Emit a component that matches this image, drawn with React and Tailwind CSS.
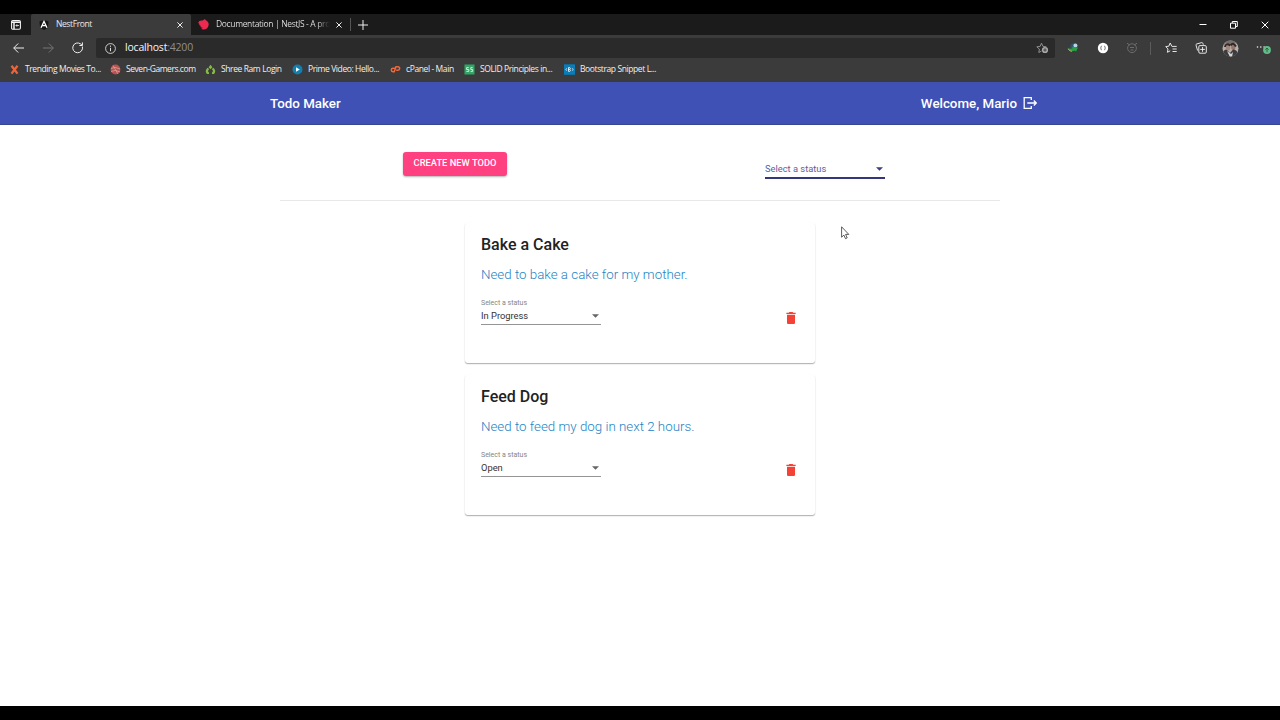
import React, { useState } from "react";

const initialTodos = [
  { id: 1, title: "Bake a Cake", text: "Need to bake a cake for my mother.", status: "In Progress" },
  { id: 2, title: "Feed Dog", text: "Need to feed my dog in next 2 hours.", status: "Open" },
];

function TabStrip() {
  return (
    <div className="flex h-[21px] items-center bg-[#1b1b1b] text-[#e8e8e8]">
      <div className="flex w-[31px] justify-center">
        <svg width="10" height="10" viewBox="0 0 10 10" fill="none" stroke="#f2f2f2" strokeWidth="1.1">
          <rect x="0.6" y="0.6" width="8.8" height="8.6" rx="1.2" />
          <path d="M.6 2.3h8.8M3 2.3v7" strokeWidth="1.5" />
          <path d="M8 5.5H5M6.2 4.2 4.9 5.5l1.3 1.3" strokeWidth=".8" />
        </svg>
      </div>
      <div className="flex h-full w-[160px] items-center rounded-t-[2px] bg-[#3b3b3b] pl-[8px] pr-[8px]">
        <svg width="10" height="10" viewBox="0 0 10 10">
          <path d="M5 0 9.6 1.6 8.9 7.8 5 10 1.1 7.8.4 1.6z" fill="#161616" />
          <path d="M2 7.8 5 1.4l3 6.4M3.3 5.7h3.4" fill="none" stroke="#fff" strokeWidth="1.3" />
        </svg>
        <span className="ml-[7px] flex-1 whitespace-nowrap text-[8.5px] tracking-[-0.4px]">NestFront</span>
        <CloseIcon />
      </div>
      <div className="flex h-full w-[159px] items-center pl-[7px] pr-[8px]">
        <svg width="11" height="11" viewBox="0 0 11 11">
          <path
            d="M.4 3.2C1.6 1.2 3.4 1.6 4.6 1.5 5.4 1.4 5.8.4 6.6.3c.8 0 .7.6 1.3.9 2 .9 3.2 3 2.6 5.3C9.9 9 7.8 10.8 5.3 10.6c-1-.1-1.6-.4-2.2-1 1 .1 1.5-.4 1.4-.9C2.8 8.5 2.2 7.4 2.5 6.4 1.4 6.3 1 5.6 1.3 5 .6 4.6.2 3.9.4 3.2z"
            fill="#ee2950"
          />
        </svg>
        <span className="ml-[7px] flex-none whitespace-nowrap bg-linear-to-r from-[#e8e8e8] from-88% to-transparent bg-clip-text text-[8.5px] tracking-[-0.35px] text-transparent">
          Documentation | NestJS - A pro
        </span>
        <span className="ml-auto flex">
          <CloseIcon />
        </span>
      </div>
      <div className="h-[13px] w-px bg-[#555]" />
      <svg className="ml-[7px]" width="10" height="10" viewBox="0 0 10 10" stroke="#eee" strokeWidth="1">
        <path d="M5 0v10M0 5h10" />
      </svg>
      <div className="ml-auto flex items-center gap-[23px] pr-[11px]">
        <svg width="8" height="8" viewBox="0 0 8 8" stroke="#fff">
          <path d="M.5 3.5h7" />
        </svg>
        <svg width="8" height="8" viewBox="0 0 8 8" fill="none" stroke="#fff">
          <path d="M.5 2.2h5v5h-5zM2.3 2V.5h5v5H5.6" />
        </svg>
        <svg width="8" height="8" viewBox="0 0 8 8" stroke="#fff">
          <path d="m.7.7 6.6 6.6M7.3.7.7 7.3" />
        </svg>
      </div>
    </div>
  );
}

function CloseIcon() {
  return (
    <svg width="6" height="6" viewBox="0 0 6 6" stroke="#eee" strokeWidth="1">
      <path d="m.4.4 5.2 5.2M5.6.4.4 5.6" />
    </svg>
  );
}

function AddressBar() {
  return (
    <div className="flex h-[25px] items-center bg-[#3b3b3b] pt-[1px]">
      <svg className="ml-[13px]" width="11" height="10" viewBox="0 0 11 10" fill="none" stroke="#f0f0f0">
        <path d="M11 5H.8M5.2.5.7 5l4.5 4.5" />
      </svg>
      <svg className="ml-[19px]" width="11" height="10" viewBox="0 0 11 10" fill="none" stroke="#767676">
        <path d="M0 5h10.2M5.8.5 10.3 5 5.8 9.5" />
      </svg>
      <svg className="ml-[18px]" width="12" height="12" viewBox="0 0 12 12" fill="none" stroke="#f0f0f0">
        <path d="M10.4 4.6A4.9 4.9 0 1 1 8.7 2L10.200 3.400M10.400.4V3.500H7.400" />
      </svg>
      <div className="ml-[12px] flex h-[20px] w-[959px] items-center rounded-[2px] bg-[#2a2a2a] pl-[9px] pr-[6px]">
        <svg width="11" height="11" viewBox="0 0 11 11" fill="none" stroke="#ddd">
          <circle cx="5.5" cy="5.5" r="4.9" strokeWidth=".9" />
          <path d="M5.5 4.8v3.4M5.5 2.6v1.2" />
        </svg>
        <span className="ml-[9px] text-[10.5px] tracking-[-0.2px] text-[#f5f5f5]">
          localhost<span className="text-[#8f8f8f]">:4200</span>
        </span>
        <svg className="ml-auto" width="13" height="12" viewBox="0 0 13 12" fill="none" stroke="#999">
          <path d="M5.5 9 2.8 10.5l.6-3.4L.8 4.8l3.3-.4L5.5 1.2l1.5 3.2 3.4.4" strokeWidth=".9" />
          <circle cx="9" cy="8" r="3.1" fill="#aaa" stroke="none" />
          <path d="M9 6.2v3.6M7.2 8h3.6" stroke="#333" strokeWidth=".8" />
        </svg>
      </div>
      <svg className="ml-[12px]" width="12" height="12" viewBox="0 0 12 12">
        <circle cx="7" cy="5" r="3.8" fill="#2d5474" />
        <circle cx="8.4" cy="3.4" r="2" fill="#b5d6e4" />
        <path d="M.8 5.6c1.500 1.400 3.200 1.600 4.800.6L5 4.800l5.800 1-1.800 4-1-1.300C5.500 10.300 2 9 .8 5.600z" fill="#25a33c" />
        <path d="M1.200 6.800c.8 1.800 2.200 2.400 3.800 2.400" fill="none" stroke="#c9b64b" />
      </svg>
      <svg className="ml-[18px]" width="12" height="12" viewBox="0 0 12 12">
        <circle cx="6" cy="6" r="5.2" fill="#fff" />
        <path d="M4.500 3.800Q2.900 6 4.500 8.200M7.500 3.800Q9.100 6 7.500 8.200" fill="none" stroke="#666" strokeWidth=".9" />
      </svg>
      <svg className="ml-[17px]" width="12" height="12" viewBox="0 0 12 12" fill="none" stroke="#6c6c6c">
        <circle cx="6" cy="6.200" r="4.400" />
        <path d="M1 1.200l3 2M11 1.200l-3 2M4 5.500h4M4.500 8h3" />
      </svg>
      <div className="ml-[12px] h-[13px] w-px bg-[#5c5c5c]" />
      <svg className="ml-[14px]" width="12" height="12" viewBox="0 0 12 12" fill="none" stroke="#eee" strokeWidth=".95">
        <path d="M6.700 4 5.200 1 3.800 4.200.7 4.600l2.300 2.300-.6 3.400 2.800-1.500M6.700 4.400h5M7.500 7h4.200M7.500 9.500h4.200" />
      </svg>
      <svg className="ml-[18px]" width="12" height="12" viewBox="0 0 12 12" fill="none" stroke="#eee" strokeWidth=".95">
        <path d="M2.600 8.600 1 3.200Q.8 2.300 1.600 2L6.700.6Q7.500.4 7.800 1.200l.5 1.500" />
        <rect x="3.800" y="3.600" width="7.500" height="7.600" rx="1.200" />
        <path d="M7.550 5v4.800M5.200 7.400h4.700" />
      </svg>
      <svg className="ml-[15px]" width="17" height="17" viewBox="0 0 17 17">
        <defs>
          <clipPath id="avatar">
            <circle cx="8.500" cy="8.500" r="8" />
          </clipPath>
        </defs>
        <g clipPath="url(#avatar)">
          <rect width="17" height="17" fill="#b5b0ae" />
          <path d="M0 0h17v5L13 3 9 5 4 3 0 7z" fill="#77706c" />
          <ellipse cx="6" cy="7.400" rx="2.300" ry="3" fill="#a98777" />
          <ellipse cx="11.300" cy="7" rx="2.200" ry="3" fill="#94766a" />
          <path d="M3 7Q3.500 2.500 8.300 5.500M8.700 5.500Q11 1.500 14 6.500" stroke="#302a29" strokeWidth="2" fill="none" />
          <path d="M0 17c0-6 3-8 5-7l3 3 3-3.500c3 0 5 2 6 7.500z" fill="#3c3b3d" />
          <path d="m5 11 3 6h2l1-5-2 2z" fill="#d8d5d5" />
        </g>
      </svg>
      <svg className="ml-[17px]" width="16" height="12" viewBox="0 0 16 12">
        <circle cx="1.500" cy="5" r=".8" fill="#eee" />
        <circle cx="4.800" cy="5" r=".8" fill="#eee" />
        <circle cx="8.100" cy="5" r=".8" fill="#eee" />
        <circle cx="11" cy="8" r="3.900" fill="#64bd88" />
        <path d="M11 10.200V6.200M9.400 7.600 11 6l1.600 1.600" fill="none" stroke="#245b3d" strokeWidth=".9" />
      </svg>
    </div>
  );
}

function Bookmark({ className, children, label }) {
  return (
    <div className={"flex flex-none items-center " + className}>
      <svg className="flex-none" width="11" height="11" viewBox="0 0 11 11">
        {children}
      </svg>
      <span className="ml-[5px] whitespace-nowrap text-[8.5px]">{label}</span>
    </div>
  );
}

function Bookmarks() {
  return (
    <div className="flex h-[22px] items-center bg-[#3b3b3b] pb-[3px] pl-[9px] text-[#f0f0f0]">
      <Bookmark className="w-[101px] tracking-[-0.4px]" label="Trending Movies To...">
        <path d="m2.500 1.800 6 7.800M8.500 1.800l-6 7.800" stroke="#ef6338" strokeWidth="2.300" />
      </Bookmark>
      <Bookmark className="w-[95px] tracking-[-0.45px]" label="Seven-Gamers.com">
        <circle cx="5.500" cy="5.500" r="4.900" fill="#b65353" />
        <path d="M1 4.500Q5 2 10 5M1 7.500Q5 5 10 8M3 1.500 8 10" stroke="#dda096" strokeWidth=".8" fill="none" />
      </Bookmark>
      <Bookmark className="w-[87px] tracking-[-0.4px]" label="Shree Ram Login">
        <path d="M5.500.800 3.600 3.300l1.900 2 1.900-2zM2.800 3.800C.3 5.500.2 8.500 2 10h2V8.500C2.500 7.500 3 6 4.200 5.300zM8.200 3.800c2.500 1.700 2.600 4.700.8 6.200H7V8.500C8.500 7.500 8 6 6.800 5.300z" fill="#86b947" />
      </Bookmark>
      <Bookmark className="w-[98px] tracking-[-0.4px]" label="Prime Video: Hello...">
        <circle cx="5.500" cy="5.500" r="5" fill="#147eae" />
        <path d="M4 3.200v4.600l3.800-2.300z" fill="#fff" />
      </Bookmark>
      <Bookmark className="w-[74px] tracking-[-0.4px]" label="cPanel - Main">
        <path d="M4.800 4.300H3a1.700 1.700 0 0 0 0 3.400h1.200L6 2.700h1.900a1.700 1.700 0 0 1 0 3.500H6.200" stroke="#f1693b" strokeWidth="1.500" fill="none" />
      </Bookmark>
      <Bookmark className="w-[100px] tracking-[-0.4px]" label="SOLID Principles in...">
        <rect x=".5" y=".5" width="10" height="10" fill="#2fa866" />
        <path d="M4.800 3.600H2.600v1.900h2.200v1.900H2.400M8.700 3.600H6.800v1.900h1.900v1.900H6.600" stroke="#d7f5e2" strokeWidth=".9" fill="none" />
      </Bookmark>
      <Bookmark className="w-[110px] tracking-[-0.4px]" label="Bootstrap Snippet L...">
        <rect y=".3" width="11" height="10.500" fill="#087db8" />
        <path d="M4.500 3.600h1.300q1.100.9 0 1.800 1.300 1 0 2H4.500zM4.500 5.400h1.300M2.800 4.500l-1.100 1 1.100 1M8.200 4.500l1.100 1-1.100 1" stroke="#fff" strokeWidth=".8" fill="none" />
      </Bookmark>
    </div>
  );
}

function Caret({ className }) {
  return (
    <svg className={className} width="7" height="4" viewBox="0 0 7 4" fill="currentColor">
      <path d="M0 .2h7L3.500 3.800z" />
    </svg>
  );
}

function TodoCard({ todo, onDelete }) {
  return (
    <div className="h-[140px] w-[350px] rounded-[3px] bg-white px-4 pt-[12px] shadow-[0_1px_1px_rgba(0,0,0,0.25),0_1px_2px_rgba(0,0,0,0.1)]">
      <h2 className="text-[16px] leading-[20px] font-medium text-[#222]">{todo.title}</h2>
      <p className="mt-[11px] text-[13.33px] leading-[18px] font-light text-[#2583c4]">{todo.text}</p>
      <div className="mt-[15px] flex items-start justify-between">
        <div className="w-[120px] border-b border-[#949494] pb-[2px]">
          <div className="text-[7px] leading-[8px] text-[#858585]">Select a status</div>
          <div className="flex items-center justify-between pr-[2px] text-[9.33px] leading-[13px] text-[#333]">
            <span className="pt-[2px]">{todo.status}</span>
            <Caret className="mt-[3px] text-[#666]" />
          </div>
        </div>
        <button className="mt-[11px]" onClick={() => onDelete(todo.id)}>
          <svg width="16" height="16" viewBox="0 0 24 24" fill="#f44336">
            <path d="M6 19c0 1.100.9 2 2 2h8c1.100 0 2-.9 2-2V7H6v12zM19 4h-3.500l-1-1h-5l-1 1H5v2h14V4z" />
          </svg>
        </button>
      </div>
    </div>
  );
}

export default function App() {
  const [todos, setTodos] = useState(initialTodos);

  const handleDelete = (id) => setTodos(todos.filter((todo) => todo.id !== id));

  return (
    <div className="relative flex h-[720px] w-[1280px] flex-col overflow-hidden bg-black py-[14px] font-['Roboto',sans-serif]">
      {/* Browser chrome */}
      <div className="font-['Open_Sans',sans-serif]">
        <TabStrip />
        <AddressBar />
        <Bookmarks />
      </div>

      {/* Page */}
      <div className="flex flex-1 flex-col bg-white">
        <header className="flex h-[43px] items-center justify-between border-b border-[#38458f] bg-[#3f51b5] pt-[2px] pr-[242px] pl-[270px] text-[13.33px] font-medium text-white">
          <span>Todo Maker</span>
          <span className="flex items-center">
            Welcome, Mario
            <svg className="mb-[1px] ml-[6px]" width="15" height="14" viewBox="0 0 15 14" fill="none" stroke="#fff" strokeWidth="1.300">
              <path d="M8.300 3.900V1.700H1.200v10.600h7.100v-2.200M4.300 7h9M10.800 4.500 13.300 7l-2.500 2.500" />
            </svg>
          </span>
        </header>

        <div className="mx-auto flex h-[76px] w-[720px] items-start justify-between border-b border-[#e8e8e8] pr-[115px] pl-[123px]">
          <button className="mt-[27px] h-[24px] w-[104px] rounded-[3px] bg-[#ff4081] pb-[2px] text-[9.33px] font-medium whitespace-nowrap text-white shadow-[0_1px_2px_rgba(0,0,0,0.3)]">
            CREATE NEW TODO
          </button>
          <div className="mt-[36px] flex h-[18px] w-[120px] items-center justify-between border-b-2 border-[#34357a] pr-[2px] text-[9.33px] text-[#5c5f9c]">
            <span>Select a status</span>
            <Caret className="text-[#3b3d85]" />
          </div>
        </div>

        <div className="mx-auto mt-[22px] flex flex-col gap-[12px]">
          {todos.map((todo) => (
            <TodoCard key={todo.id} todo={todo} onDelete={handleDelete} />
          ))}
        </div>
      </div>

      {/* Pointer */}
      <svg className="absolute top-[226px] left-[841px]" width="9" height="14" viewBox="0 0 9 14">
        <path d="M.6.8v10.400l2.300-2.100 1.600 3.600 1.700-.8-1.600-3.500h3.200z" fill="#fff" stroke="#333" strokeWidth=".8" />
      </svg>
    </div>
  );
}
